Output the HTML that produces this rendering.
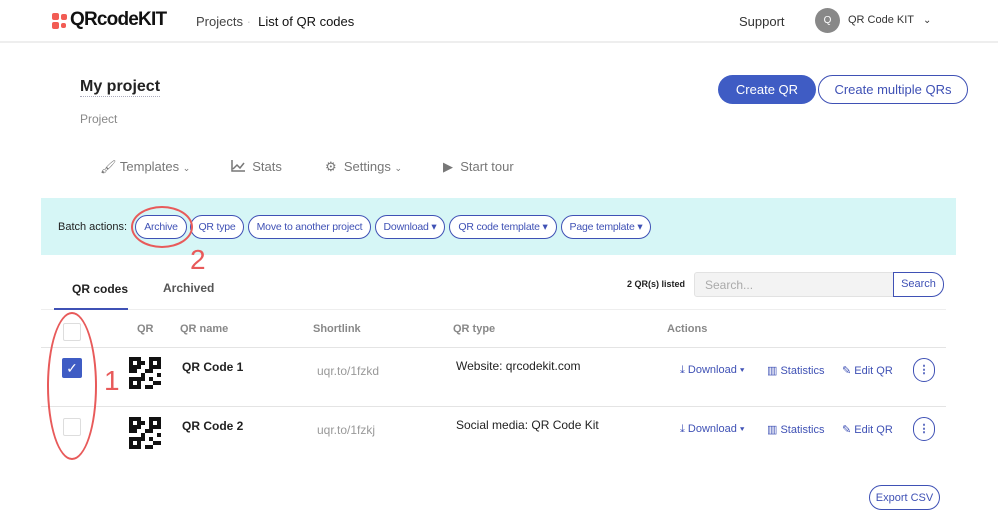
<!DOCTYPE html>
<html><head><meta charset="utf-8">
<style>
*{margin:0;padding:0;box-sizing:border-box}
body{width:998px;height:516px;position:relative;background:#fff;font-family:"Liberation Sans",sans-serif;overflow:hidden;color:#222}
.a{position:absolute;white-space:nowrap}
.pill{position:absolute;height:24px;border:1px solid #3f51b5;border-radius:12px;font-size:10.5px;color:#3f51b5;line-height:23px;text-align:center;background:#fff;letter-spacing:-0.2px}
.blue{color:#3f51b5}
.g{color:#888}
.hl{position:absolute;height:1px;background:#e4e4e4}
.cb{position:absolute;width:18px;height:18px;border:1px solid #ddd;border-radius:2px;background:#fff}
</style></head><body>
<div class="hl" style="left:0;top:41px;width:998px;height:2px;background:#eee"></div>
<svg class="a" style="left:52px;top:13px" width="16" height="16"><rect x="0" y="0" width="7" height="7" rx="2" fill="#f25c54"/><rect x="9" y="1" width="6" height="6" rx="2" fill="#f25c54"/><rect x="0" y="9" width="7" height="7" rx="2" fill="#f25c54"/><rect x="9" y="10" width="5" height="5" rx="2" fill="#f25c54"/></svg>
<div class="a" style="left:70px;top:9px;font-size:19px;font-weight:bold;letter-spacing:-0.8px;color:#111">QRcodeKIT</div>
<div class="a" style="left:196px;top:14px;font-size:13px;color:#444">Projects <span style="color:#ccc">·</span> <span style="color:#111">&nbsp;List of QR codes</span></div>
<div class="a" style="left:739px;top:14px;font-size:13px;color:#333">Support</div>
<div class="a" style="left:815px;top:8px;width:25px;height:25px;border-radius:50%;background:#888;color:#fff;font-size:10px;text-align:center;line-height:25px">Q</div>
<div class="a" style="left:848px;top:14px;font-size:11px;color:#333">QR Code KIT &nbsp;&nbsp;<span style="font-size:10px">⌄</span></div>
<div class="a" style="left:80px;top:78px;font-size:16px;font-weight:bold;color:#222;border-bottom:1px dotted #aab">My project</div>
<div class="a" style="left:80px;top:112px;font-size:12px;color:#888">Project</div>
<div class="a" style="left:718px;top:75px;width:98px;height:29px;border-radius:15px;background:#3f5cc4;color:#fff;font-size:13px;line-height:29px;text-align:center">Create QR</div>
<div class="a" style="left:818px;top:75px;width:150px;height:29px;border-radius:15px;border:1px solid #3f51b5;color:#3f51b5;font-size:13px;line-height:27px;text-align:center">Create multiple QRs</div>
<div class="a g" style="left:100px;top:159px;font-size:13px;color:#777">🖌 Templates <span style="font-size:9px">⌄</span></div>
<div class="a" style="left:231px;top:159px;font-size:13px;color:#777"><svg width="14" height="12" style="vertical-align:-1px"><path d="M1 0v11h13M2 9l4-4 3 3 4-5" stroke="#777" fill="none" stroke-width="1.5"/></svg> &nbsp;Stats</div>
<div class="a" style="left:325px;top:159px;font-size:13px;color:#777">⚙ &nbsp;Settings <span style="font-size:9px">⌄</span></div>
<div class="a" style="left:443px;top:159px;font-size:13px;color:#777">▶ &nbsp;Start tour</div>
<div class="a" style="left:41px;top:198px;width:915px;height:57px;background:#d6f6f6"></div>
<div class="a" style="left:58px;top:221px;font-size:11px;color:#222">Batch actions:</div>
<div class="pill" style="left:135px;top:215px;width:52px">Archive</div>
<div class="pill" style="left:190px;top:215px;width:54px">QR type</div>
<div class="pill" style="left:248px;top:215px;width:123px">Move to another project</div>
<div class="pill" style="left:375px;top:215px;width:70px">Download ▾</div>
<div class="pill" style="left:449px;top:215px;width:108px">QR code template ▾</div>
<div class="pill" style="left:561px;top:215px;width:90px">Page template ▾</div>
<div class="a" style="left:131px;top:206px;width:62px;height:42px;border:2.5px solid #e85a5a;border-radius:50%"></div>
<div class="a" style="left:190px;top:244px;font-size:28px;color:#e85a5a">2</div>
<div class="a" style="left:72px;top:282px;font-size:12px;font-weight:bold;color:#222">QR codes</div>
<div class="a" style="left:163px;top:281px;font-size:12px;font-weight:bold;color:#555">Archived</div>
<div class="hl" style="left:41px;top:309px;width:905px;background:#eee"></div>
<div class="a" style="left:54px;top:308px;width:74px;height:2px;background:#3f51b5"></div>
<div class="a" style="left:627px;top:279px;font-size:9px;font-weight:bold;color:#222">2 QR(s) listed</div>
<div class="a" style="left:694px;top:272px;width:200px;height:25px;background:#f3f3f3;border:1px solid #e2e2e2;border-radius:3px 0 0 3px;font-size:12px;color:#aaa;padding:5px 10px">Search...</div>
<div class="a" style="left:893px;top:272px;width:51px;height:25px;border:1px solid #3f51b5;border-radius:0 12px 12px 0;font-size:11px;color:#3f51b5;text-align:center;line-height:23px">Search</div>
<div class="cb" style="left:63px;top:323px"></div>
<div class="a" style="left:137px;top:323px;font-size:11px;font-weight:bold;color:#888">QR</div>
<div class="a" style="left:180px;top:323px;font-size:11px;font-weight:bold;color:#888">QR name</div>
<div class="a" style="left:313px;top:323px;font-size:11px;font-weight:bold;color:#888">Shortlink</div>
<div class="a" style="left:453px;top:323px;font-size:11px;font-weight:bold;color:#888">QR type</div>
<div class="a" style="left:667px;top:323px;font-size:11px;font-weight:bold;color:#888">Actions</div>
<div class="hl" style="left:41px;top:347px;width:905px"></div>
<div class="hl" style="left:41px;top:406px;width:905px"></div>
<div class="a" style="left:62px;top:358px;width:20px;height:20px;background:#3f5cc4;border-radius:2px;color:#fff;font-size:14px;text-align:center;line-height:20px">✓</div>
<svg class="a" style="left:129px;top:357px" width="32" height="32" viewBox="0 0 8 8"><g fill="#111"><path d="M0 0h3v3H0zM5 0h3v3H5zM0 5h3v3H0z"/><rect x="1" y="1" width="1" height="1" fill="#fff"/><rect x="6" y="1" width="1" height="1" fill="#fff"/><rect x="1" y="6" width="1" height="1" fill="#fff"/><path d="M3 1h1v1H3zM4 3h2v1H4zM3 4h1v2H3zM5 5h1v1H5zM6 6h2v1H6zM4 7h2v1H4zM7 4h1v1H7zM0 3h2v1H0z"/></g></svg>
<div class="a" style="left:182px;top:360px;font-size:12px;font-weight:bold">QR Code 1</div>
<div class="a" style="left:317px;top:364px;font-size:12px;color:#999">uqr.to/1fzkd</div>
<div class="a" style="left:456px;top:359px;font-size:12px;color:#222">Website: qrcodekit.com</div>
<div class="a blue" style="left:680px;top:364px;font-size:11px">⤓ Download ▾</div>
<div class="a blue" style="left:767px;top:364px;font-size:11px">▥ Statistics</div>
<div class="a blue" style="left:842px;top:364px;font-size:11px">✎ Edit QR</div>
<div class="a" style="left:913px;top:358px;width:22px;height:24px;border:1px solid #3f51b5;border-radius:12px;text-align:center;font-size:11px;font-weight:bold;color:#3f51b5;line-height:22px">⋮</div>
<div class="cb" style="left:63px;top:418px"></div>
<svg class="a" style="left:129px;top:417px" width="32" height="32" viewBox="0 0 8 8"><g fill="#111"><path d="M0 0h3v3H0zM5 0h3v3H5zM0 5h3v3H0z"/><rect x="1" y="1" width="1" height="1" fill="#fff"/><rect x="6" y="1" width="1" height="1" fill="#fff"/><rect x="1" y="6" width="1" height="1" fill="#fff"/><path d="M3 1h1v1H3zM4 3h2v1H4zM3 4h1v2H3zM5 5h1v1H5zM6 6h2v1H6zM4 7h2v1H4zM7 4h1v1H7zM0 3h2v1H0z"/></g></svg>
<div class="a" style="left:182px;top:419px;font-size:12px;font-weight:bold">QR Code 2</div>
<div class="a" style="left:317px;top:423px;font-size:12px;color:#999">uqr.to/1fzkj</div>
<div class="a" style="left:456px;top:418px;font-size:12px;color:#222">Social media: QR Code Kit</div>
<div class="a blue" style="left:680px;top:423px;font-size:11px">⤓ Download ▾</div>
<div class="a blue" style="left:767px;top:423px;font-size:11px">▥ Statistics</div>
<div class="a blue" style="left:842px;top:423px;font-size:11px">✎ Edit QR</div>
<div class="a" style="left:913px;top:417px;width:22px;height:24px;border:1px solid #3f51b5;border-radius:12px;text-align:center;font-size:11px;font-weight:bold;color:#3f51b5;line-height:22px">⋮</div>
<div class="a" style="left:47px;top:312px;width:50px;height:148px;border:2.5px solid #e85a5a;border-radius:50%"></div>
<div class="a" style="left:104px;top:365px;font-size:28px;color:#e85a5a">1</div>
<div class="a" style="left:869px;top:485px;width:71px;height:25px;border:1px solid #3f51b5;border-radius:13px;font-size:11px;color:#3f51b5;text-align:center;line-height:24px">Export CSV</div>
</body></html>
